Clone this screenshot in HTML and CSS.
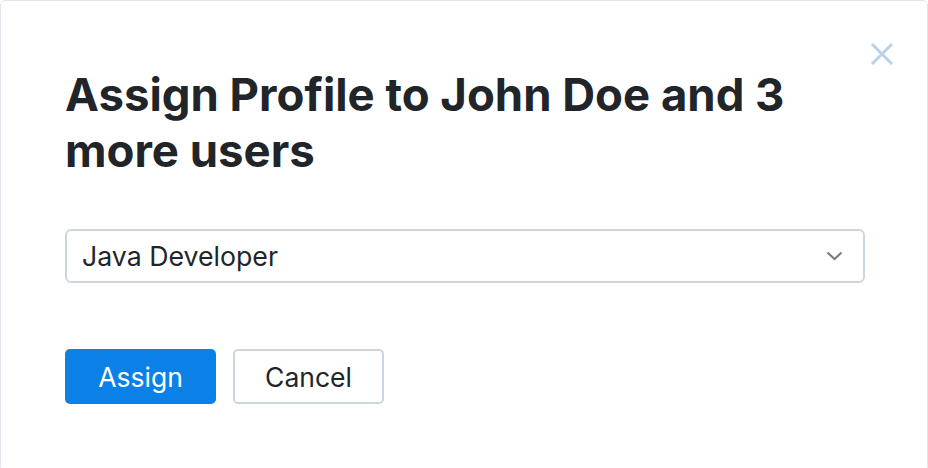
FILE: index.html
```html
<!DOCTYPE html>
<html>

<head>
  <title>Assign Profile</title>
  <link rel="stylesheet" href="styles.css">
</head>

<body>
  <!-- Assign profile modal -->
  <div class="modal">
    <button class="modal-close" aria-label="Close">
      <svg width="24" height="24" viewBox="0 0 24 24">
        <path d="M2 2 L22 22 M22 2 L2 22" stroke="#b9d2e6" stroke-width="3" fill="none" />
      </svg>
    </button>

    <h1 class="modal-title">Assign Profile to John Doe and 3 more users</h1>

    <div class="select-box">
      <span class="select-value">Java Developer</span>
      <svg class="select-chevron" width="17" height="10" viewBox="0 0 17 10">
        <path d="M1.5 1.5 L8.5 8 L15.5 1.5" stroke="#7a7f85" stroke-width="2.2" fill="none" />
      </svg>
    </div>

    <div class="modal-actions">
      <button class="btn btn-primary">Assign</button>
      <button class="btn btn-outline">Cancel</button>
    </div>
  </div>
</body>

</html>
```

FILE: styles.css
```css
/* Reset some default styles */
body,
h1,
button {
  margin: 0;
  padding: 0;
}

body {
  font-family: 'Inter', 'Noto Sans', sans-serif;
  background-color: #fff;
  color: #212529;
}

.modal {
  position: relative;
  box-sizing: border-box;
  width: 928px;
  height: 472px;
  border: 1px solid #dfe4ea;
  border-radius: 6px;
  padding: 66px 64px 0 64px;
}

.modal-close {
  position: absolute;
  top: 41px;
  right: 33px;
  background: none;
  border: none;
  width: 24px;
  height: 24px;
  cursor: pointer;
}

.modal-close svg {
  display: block;
}

.modal-title {
  font-size: 45.5px;
  font-weight: 700;
  line-height: 56px;
  width: 760px;
}

.select-box {
  display: flex;
  align-items: center;
  justify-content: space-between;
  box-sizing: border-box;
  width: 800px;
  height: 54px;
  margin-top: 50px;
  padding: 0 20px 0 15px;
  border: 2px solid #cdd6df;
  border-radius: 6px;
  font-size: 26.7px;
}

.modal-actions {
  display: flex;
  gap: 17px;
  margin-top: 66px;
}

.btn {
  box-sizing: border-box;
  width: 151px;
  height: 55px;
  border-radius: 5px;
  font-family: inherit;
  font-size: 26.5px;
  cursor: pointer;
}

.btn-primary {
  background-color: #0b80e6;
  border: none;
  color: #fff;
}

.btn-outline {
  background-color: #fff;
  border: 2px solid #cdd6df;
  color: #212529;
}
```
